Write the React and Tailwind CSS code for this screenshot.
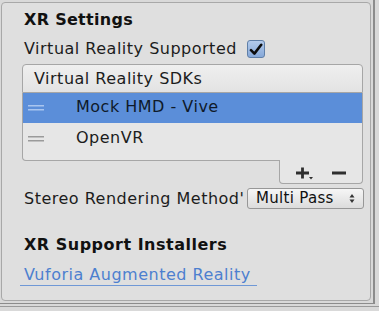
import React from "react";

function Handle({ color }) {
  return (
    <svg width="16" height="8" viewBox="0 0 16 8" className="block">
      <rect x="0" y="1" width="16" height="1.5" fill={color} />
      <rect x="0" y="5" width="16" height="1.5" fill={color} />
    </svg>
  );
}

export default function App() {
  return (
    <div className="w-[379px] h-[311px] bg-[#d9d9d9] overflow-hidden font-['DejaVu_Sans',sans-serif] text-[16px] tracking-[0.5px] text-[#1c1c1c]">
      <div className="w-[375px] h-[304px] border-r-2 border-b border-[#8c8c8c] pl-px pt-[2px]">
        <div className="w-[370px] h-[299px] border border-[#a8a8a8] rounded-[4px] bg-[#dfdfdf] pl-[20px] pr-[6px] pt-[7px] flex flex-col">
          <div className="h-[20px] leading-[20px] pl-[2px] font-bold text-[#111] tracking-[0.3px]">XR Settings</div>

          <div className="mt-[9px] h-[20px] flex items-center">
            <div className="w-[225px] pl-[2px] leading-[20px] whitespace-nowrap">Virtual Reality Supported</div>
            <div className="w-[18px] h-[18px] rounded-[3px] border border-[#5f7fa8] bg-gradient-to-b from-[#b3cbec] to-[#86a8d8] flex items-center justify-center">
              <svg width="14" height="13" viewBox="0 0 14 13">
                <path d="M2 7.2 L5.4 10.6 L12.2 1.8" fill="none" stroke="#0d0d0d" strokeWidth="2.6" strokeLinecap="round" strokeLinejoin="round" />
              </svg>
            </div>
          </div>

          <div className="mt-[5px] w-[341px] flex flex-col">
            <div className="h-[29px] border border-[#a6a6a6] rounded-t-[4px] bg-gradient-to-b from-[#efefef] to-[#e3e3e3] pl-[11px] flex items-center">
              Virtual Reality SDKs
            </div>
            <div className="h-[68px] border-x border-b border-[#a6a6a6] rounded-bl-[4px] bg-[#e6e6e6] flex flex-col">
              <div className="h-[30px] bg-[#5b8ed9] flex items-center pl-[5px] text-[#0f1a2a]">
                <Handle color="#a9c5ef" />
                <span className="ml-[32px] leading-[20px] -mt-[2px]">Mock HMD - Vive</span>
              </div>
              <div className="h-[30px] flex items-center pl-[5px] pt-[2px]">
                <Handle color="#9a9a9a" />
                <span className="ml-[32px] leading-[20px] -mt-[3px]">OpenVR</span>
              </div>
            </div>
            <div className="self-end -mt-px w-[84px] h-[24px] border-x border-b border-[#a6a6a6] rounded-b-[4px] bg-[#e6e6e6]">
              <svg width="82" height="23" viewBox="0 0 82 23" className="block">
                <path d="M16 13 H29 M22.5 7.5 V18.5" stroke="#2e2e2e" strokeWidth="2.8" fill="none" />
                <path d="M29 17 L33 17 L31 19.5 Z" fill="#2e2e2e" />
                <path d="M52 13 H66" stroke="#2e2e2e" strokeWidth="3" fill="none" />
              </svg>
            </div>
          </div>

          <div className="mt-[4px] h-[21px] flex items-center">
            <div className="w-[225px] pl-[2px] leading-[20px] whitespace-nowrap overflow-hidden">Stereo Rendering Method'</div>
            <div className="w-[117px] h-[21px] border border-[#979797] rounded-[3px] bg-gradient-to-b from-[#f6f6f6] to-[#dcdcdc] pl-[8px] pr-[8px] flex items-center justify-between text-[15px] tracking-[0.3px] text-[#111]">
              <span className="leading-[19px]">Multi Pass</span>
              <svg width="6" height="11" viewBox="0 0 6 11" className="block">
                <path d="M0.5 4.5 L3 1 L5.5 4.5 Z" fill="#333" />
                <path d="M0.5 6.5 L3 10 L5.5 6.5 Z" fill="#333" />
              </svg>
            </div>
          </div>

          <div className="mt-[26px] h-[20px] leading-[20px] pl-[2px] font-bold text-[#111] tracking-[0.5px]">XR Support Installers</div>

          <div className="mt-[9px] -ml-[2px] w-[237px] h-[22px] border-b border-[#6f98d6] pl-[4px] leading-[21px] text-[#4d7fcf] whitespace-nowrap">
            Vuforia Augmented Reality
          </div>
        </div>
      </div>
      <div className="mt-[2px] h-px bg-[#9a9a9a]" />
    </div>
  );
}
